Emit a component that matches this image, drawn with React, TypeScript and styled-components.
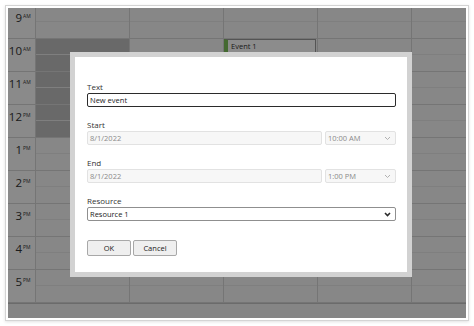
import styled, { createGlobalStyle } from 'styled-components';

const GlobalStyle = createGlobalStyle`
    html, body {
        margin: 0;
        padding: 0;
        background: #ffffff;
    }

    body {
        font-family: "Open Sans", "Noto Sans", sans-serif;
        color: #333333;
    }
`;

const HOURS = [
    { num: '9', ampm: 'AM' },
    { num: '10', ampm: 'AM' },
    { num: '11', ampm: 'AM' },
    { num: '12', ampm: 'PM' },
    { num: '1', ampm: 'PM' },
    { num: '2', ampm: 'PM' },
    { num: '3', ampm: 'PM' },
    { num: '4', ampm: 'PM' },
    { num: '5', ampm: 'PM' },
];

const DAY_COLUMNS = [0, 1, 2, 3, 4];

const StyledFrame = styled.div`
    width: 458px;
    height: 310px;
    margin: 5px;
    padding: 2px;
    border: 1px solid #d4d4d4;
    box-shadow: 0 1px 3px rgba(0, 0, 0, 0.12);
`;

const StyledCalendar = styled.div`
    position: relative;
    width: 458px;
    height: 310px;
    overflow: hidden;

    display: flex;
    flex-direction: column;

    background-color: #f6f6f6;
`;

const StyledBody = styled.div`
    margin-top: -2px;
    display: flex;
`;

const StyledTimeColumn = styled.div`
    width: 28px;
    flex-shrink: 0;
    border-right: 1px solid #d6d6d6;
    box-sizing: border-box;
    background-color: #fbfbfb;
`;

const StyledHourLabel = styled.div`
    height: 33px;
    box-sizing: border-box;
    border-bottom: 1px solid #d6d6d6;
    padding: 5px 3px 0 0;

    display: flex;
    justify-content: flex-end;
    align-items: flex-start;

    .num {
        font-size: 11.5px;
        line-height: 13px;
        color: #333333;
    }

    .ampm {
        margin-left: 1px;
        margin-top: 2px;
        font-size: 5px;
        line-height: 6px;
        color: #333333;
        width: 9px;
    }
`;

const StyledDayColumn = styled.div<{ $last?: boolean }>`
    position: relative;
    width: ${({ $last }) => ($last ? 'auto' : '94px')};
    flex: ${({ $last }) => ($last ? '1' : '0 0 auto')};
    box-sizing: border-box;
    border-right: ${({ $last }) => ($last ? 'none' : '1px solid #d6d6d6')};
`;

const StyledCell = styled.div<{ $hourEnd: boolean; $selected?: boolean }>`
    height: ${({ $hourEnd }) => ($hourEnd ? '17px' : '16px')};
    box-sizing: border-box;
    border-bottom: 1px solid ${({ $hourEnd }) => ($hourEnd ? '#d6d6d6' : '#e8e8e8')};
    background-color: ${({ $selected }) => ($selected ? '#c0c0c0' : 'transparent')};
`;

const StyledEvent = styled.div`
    position: absolute;
    top: 33px;
    left: 0;
    width: 92px;
    height: 32px;
    box-sizing: border-box;

    border: 1px solid #9a9a9a;
    border-left: 4px solid #7cbf5a;
    background-color: #ffffff;

    padding: 1px 3px;
    font-size: 7.5px;
    line-height: 10px;
    color: #333333;
`;

const StyledFooter = styled.div`
    flex: 1;
    border-top: 1px solid #c4c4c4;
    background-color: #f2f2f2;
`;

const StyledOverlay = styled.div`
    position: absolute;
    inset: 0;
    background-color: rgba(0, 0, 0, 0.45);
`;

const StyledModal = styled.div`
    position: absolute;
    left: 62px;
    top: 44px;
    width: 342px;
    height: 225px;
    box-sizing: border-box;

    border: 5px solid #d2d2d2;
    background-color: #ffffff;
    padding: 24px 11px 0 12px;
`;

const StyledField = styled.div`
    margin-bottom: 12px;
`;

const StyledLabel = styled.div`
    height: 12px;
    font-size: 8px;
    line-height: 12px;
    color: #333333;
`;

const StyledRow = styled.div`
    display: flex;
    gap: 3px;
`;

const StyledInput = styled.div<{ $focused?: boolean; $disabled?: boolean; $width?: string }>`
    height: 14px;
    box-sizing: border-box;
    width: ${({ $width }) => $width || '100%'};
    flex-shrink: 0;

    display: flex;
    align-items: center;
    justify-content: space-between;
    padding: 0 4px 0 2px;

    border: ${({ $focused, $disabled }) =>
        $focused ? '1.5px solid #2b2b2b' : $disabled ? '1px solid #e2e2e2' : '1px solid #8f8f8f'};
    border-radius: 2px;
    background-color: ${({ $disabled }) => ($disabled ? '#f7f7f7' : '#ffffff')};

    font-size: 7.5px;
    color: ${({ $disabled }) => ($disabled ? '#8a8a8a' : '#222222')};
    white-space: nowrap;
`;

const StyledButtons = styled.div`
    padding-top: 7px;
    display: flex;
    gap: 2px;
`;

const StyledButton = styled.button`
    width: 44px;
    height: 16px;
    padding: 0;
    box-sizing: border-box;

    border: 1px solid #a8a8a8;
    border-radius: 2px;
    background-color: #efefef;

    font-family: "Open Sans", "Noto Sans", sans-serif;
    font-size: 7.5px;
    color: #222222;
`;

function Chevron({ disabled }: { disabled?: boolean }) {
    return (
        <svg width="7" height="5" viewBox="0 0 7 5">
            <path
                d="M1 1 L3.5 3.5 L6 1"
                fill="none"
                stroke={disabled ? '#a8a8a8' : '#2b2b2b'}
                strokeWidth={disabled ? 0.9 : 1.6} />
        </svg>
    );
}

function DayColumn({ index }: { index: number }) {
    return (
        <StyledDayColumn $last={index === DAY_COLUMNS.length - 1}>
            {Array.from({ length: HOURS.length * 2 }).map((_, i) => (
                <StyledCell
                    key={i}
                    $hourEnd={i % 2 === 1}
                    $selected={index === 0 && i >= 2 && i < 8} />
            ))}

            {index === 2 && <StyledEvent>Event 1</StyledEvent>}
        </StyledDayColumn>
    );
}

function App() {
    return (
        <>
            <GlobalStyle />

            <StyledFrame>
                <StyledCalendar>
                    <StyledBody>
                        <StyledTimeColumn>
                            {HOURS.map((hour) => (
                                <StyledHourLabel key={hour.num}>
                                    <span className="num">{hour.num}</span>
                                    <span className="ampm">{hour.ampm}</span>
                                </StyledHourLabel>
                            ))}
                        </StyledTimeColumn>

                        {DAY_COLUMNS.map((index) => (
                            <DayColumn key={index} index={index} />
                        ))}
                    </StyledBody>

                    <StyledFooter />

                    <StyledOverlay />

                    <StyledModal>
                        <StyledField>
                            <StyledLabel>Text</StyledLabel>
                            <StyledInput $focused>New event</StyledInput>
                        </StyledField>

                        <StyledField>
                            <StyledLabel>Start</StyledLabel>
                            <StyledRow>
                                <StyledInput $disabled $width="235px">8/1/2022</StyledInput>
                                <StyledInput $disabled $width="71px">
                                    10:00 AM
                                    <Chevron disabled />
                                </StyledInput>
                            </StyledRow>
                        </StyledField>

                        <StyledField>
                            <StyledLabel>End</StyledLabel>
                            <StyledRow>
                                <StyledInput $disabled $width="235px">8/1/2022</StyledInput>
                                <StyledInput $disabled $width="71px">
                                    1:00 PM
                                    <Chevron disabled />
                                </StyledInput>
                            </StyledRow>
                        </StyledField>

                        <StyledField>
                            <StyledLabel>Resource</StyledLabel>
                            <StyledInput>
                                Resource 1
                                <Chevron />
                            </StyledInput>
                        </StyledField>

                        <StyledButtons>
                            <StyledButton>OK</StyledButton>
                            <StyledButton>Cancel</StyledButton>
                        </StyledButtons>
                    </StyledModal>
                </StyledCalendar>
            </StyledFrame>
        </>
    );
}

export default App;
